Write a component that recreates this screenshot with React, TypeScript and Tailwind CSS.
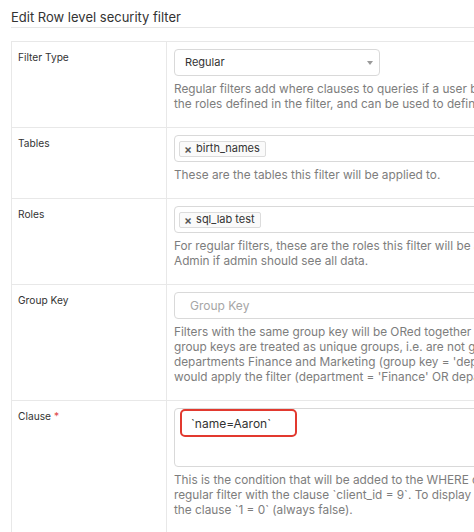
const helpLines = {
  filterType: [
    "Regular filters add where clauses to queries if a user belongs to a role referenced in the filter. Base filters apply filters to all queries except",
    "the roles defined in the filter, and can be used to define what users can see if no RLS filters within a filter group apply to them.",
  ],
  tables: ["These are the tables this filter will be applied to."],
  roles: [
    "For regular filters, these are the roles this filter will be applied to. For base filters, these are the roles that the filter DOES NOT apply to, e.g.",
    "Admin if admin should see all data.",
  ],
  groupKey: [
    "Filters with the same group key will be ORed together within the group, while different filter groups will be ANDed together. Undefined",
    "group keys are treated as unique groups, i.e. are not grouped together. For example, if a table has three filters, of which two are for",
    "departments Finance and Marketing (group key = 'department'), and one refers to the region Europe (group key = 'region'), the filter clause",
    "would apply the filter (department = 'Finance' OR department = 'Marketing') AND (region = 'Europe').",
  ],
  clause: [
    "This is the condition that will be added to the WHERE clause. For example, to only return rows for a particular client, you might define a",
    "regular filter with the clause `client_id = 9`. To display no rows unless a user belongs to a RLS filter role, a base filter can be created with",
    "the clause `1 = 0` (always false).",
  ],
}

function Help({ lines }: { lines: string[] }) {
  return (
    <div className="mt-[6px] text-[11.8px] leading-[15px] text-[#7d7d7d]">
      {lines.map((line) => (
        <div key={line} className="whitespace-nowrap">
          {line}
        </div>
      ))}
    </div>
  )
}

function Row({
  label,
  required,
  children,
  last,
}: {
  label: string
  required?: boolean
  children: React.ReactNode
  last?: boolean
}) {
  return (
    <div className={`flex ${last ? "" : "border-b border-[#e8e8e8]"}`}>
      <div className="w-[155px] shrink-0 border-r border-[#e8e8e8] pl-[6px] pt-[8px] text-[10.2px] leading-[14px] text-[#333]">
        {label}
        {required && <span className="ml-[3px] text-[#e04a4a]">*</span>}
      </div>
      <div className="flex-1 pl-[7px] pt-[7px] pb-[15px]">{children}</div>
    </div>
  )
}

function Tag({ text }: { text: string }) {
  return (
    <div className="flex h-[16px] items-center rounded-[2px] border border-[#dcdcdc] bg-[#fafafa] pl-[4px] pr-[5px] text-[11px] text-[#333]">
      <span className="mr-[4px] text-[12px] font-semibold leading-none text-[#555]">×</span>
      {text}
    </div>
  )
}

export default function App() {
  return (
    <div
      className="h-[532px] w-[474px] overflow-hidden bg-white"
      style={{ fontFamily: "Inter, 'Liberation Sans', sans-serif" }}
    >
      <div className="ml-[11px] h-[28px] w-[1200px] border-b border-[#e6e6e6] pt-[8px] text-[13px] leading-[18px] text-[#333]">
        Edit Row level security filter
      </div>

      <div className="ml-[11px] mt-[13px] w-[1200px] border-l border-t border-[#e8e8e8]">
        <Row label="Filter Type">
          <div className="flex h-[27px] w-[206px] items-center justify-between rounded-[4px] border border-[#d9d9d9] pl-[10px] pr-[6px] text-[11px] text-[#333]">
            Regular
            <svg width="6" height="4" viewBox="0 0 6 4">
              <path d="M0 0h6L3 4z" fill="#9a9a9a" />
            </svg>
          </div>
          <Help lines={helpLines.filterType} />
        </Row>

        <Row label="Tables">
          <div className="flex h-[27px] items-center rounded-[4px] border border-[#d9d9d9] pl-[4px]">
            <Tag text="birth_names" />
          </div>
          <Help lines={helpLines.tables} />
        </Row>

        <Row label="Roles">
          <div className="flex h-[27px] items-center rounded-[4px] border border-[#d9d9d9] pl-[4px]">
            <Tag text="sql_lab test" />
          </div>
          <Help lines={helpLines.roles} />
        </Row>

        <Row label="Group Key">
          <div className="flex h-[27px] items-center rounded-[4px] border border-[#d9d9d9] pl-[15px] text-[12px] text-[#a6a6a6]">
            Group Key
          </div>
          <Help lines={helpLines.groupKey} />
        </Row>

        <Row label="Clause" required last>
          <div className="relative h-[59px] rounded-[4px] border border-[#d9d9d9] pl-[16px] pt-[7px] text-[12px] leading-[15px] text-[#333]">
            `name=Aaron`
            <div className="absolute left-[5px] top-[0px] h-[28px] w-[117px] rounded-[5px] border-2 border-[#e2392f]" />
          </div>
          <Help lines={helpLines.clause} />
        </Row>
      </div>
    </div>
  )
}
